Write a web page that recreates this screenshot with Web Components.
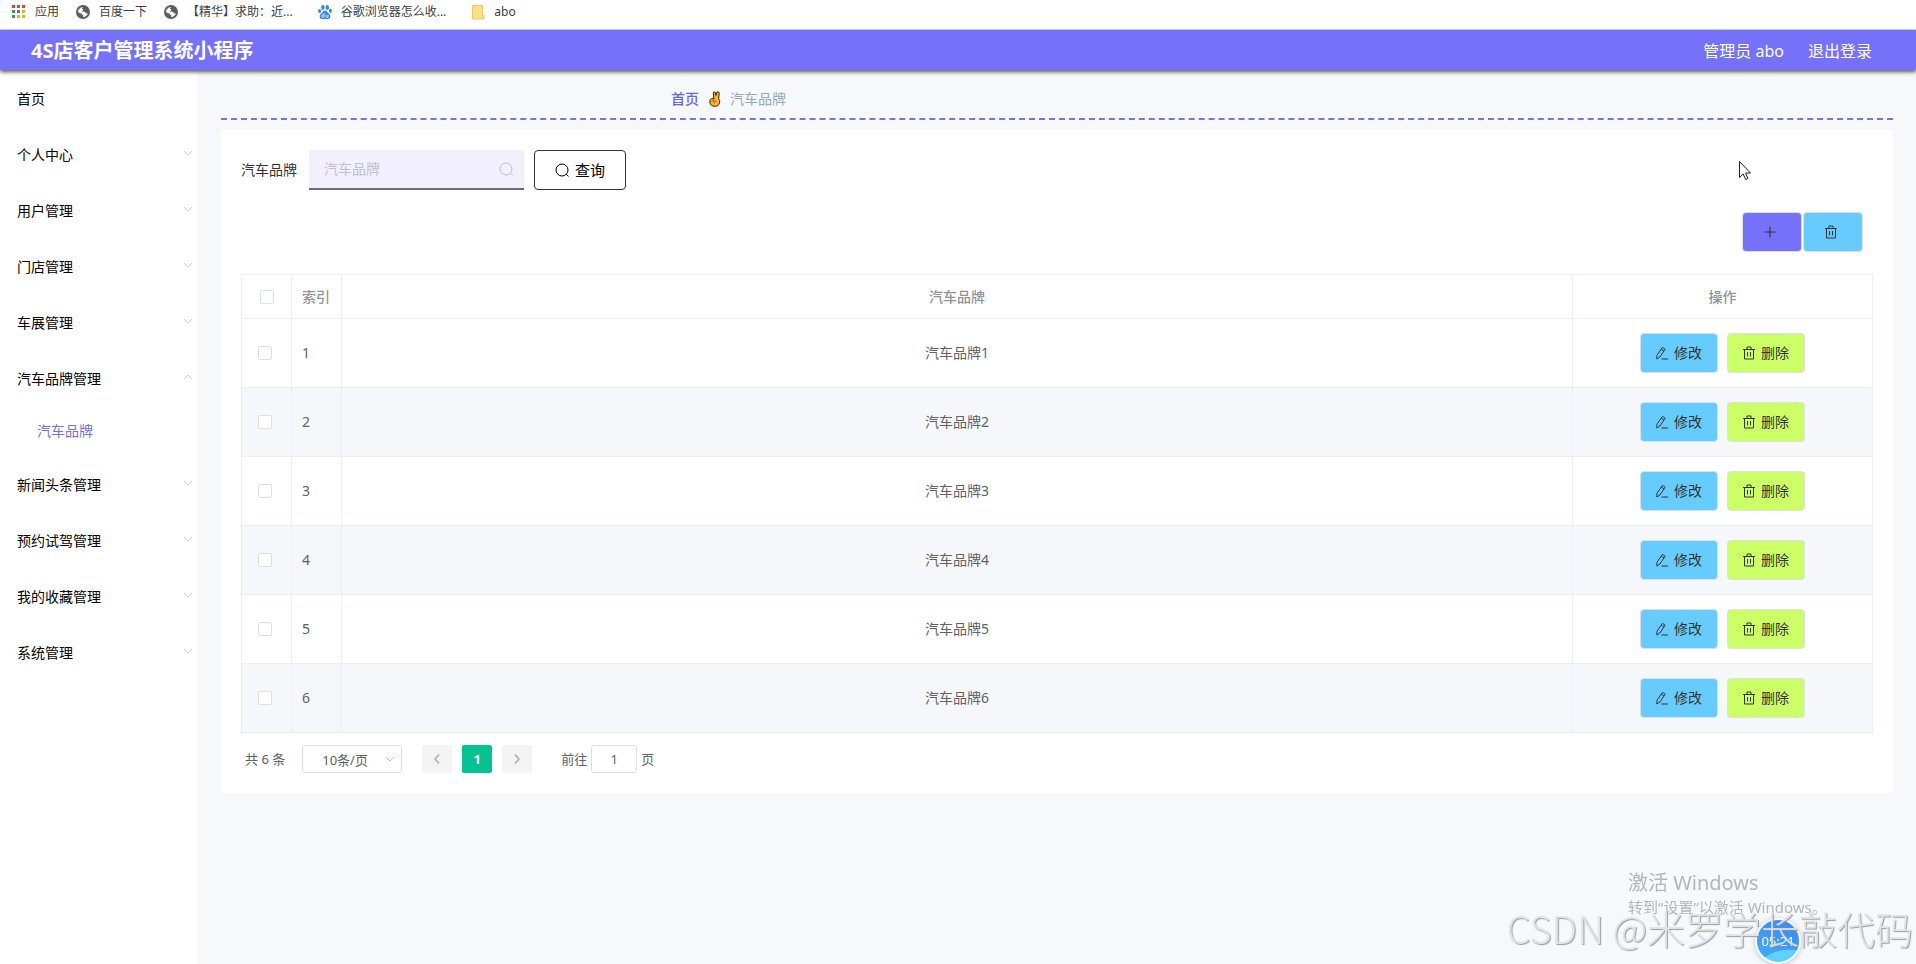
<!DOCTYPE html>
<html lang="zh-CN">
<head>
<meta charset="utf-8">
<title>4S店客户管理系统小程序</title>
<style>
html, body { margin: 0; min-height: 100vh; }
body { background: #f6f8fb; font: 14px/20px "Noto Sans", "Noto Sans CJK SC", sans-serif; color: #333; overflow-x: hidden; }
</style>
</head>
<body>
<app-shell></app-shell>
<script>
const define = (name, html, init) => {
  const t = document.createElement('template');
  t.innerHTML = '<style>*{box-sizing:border-box}a{color:inherit;text-decoration:none}svg{display:block;flex:none}button,input,select{font:inherit;margin:0}</style>' + html;
  customElements.define(name, class extends HTMLElement {
    constructor() {
      super();
      this.attachShadow({ mode: 'open' }).append(t.content.cloneNode(true));
    }
    connectedCallback() { if (init) init(this, this.shadowRoot); }
  });
};

const icons = {
  search: '<circle cx="7" cy="7" r="6"/><path d="M11.4 11.4 13.5 13.4"/>',
  plus: '<path d="M7 1.500v11M1.500 7h11"/>',
  trash: '<path d="M1 3.500h12M2.500 3.500v9.500h9V3.500M5 3.300V1h4v2.300M5.500 6v4.500M8.500 6v4.500"/>',
  edit: '<path d="M2 9.200 7.400 1.400 10.200 3.200 4.900 11 1.800 13z M6.200 3.100 9 5M6.500 13h6.500"/>',
  down: '<path d="M3 5l4 4 4-4"/>',
  up: '<path d="M3 9l4-4 4 4"/>',
  left: '<path d="M9 2.500 5 7l4 4.500"/>',
  right: '<path d="M5 2.500 9 7l-4 4.500"/>'
};
define('ui-icon', `<style>:host{display:block;width:14px;height:14px;flex:none}svg{fill:none;stroke:currentColor}</style><svg width="14" height="14" viewBox="0 0 14 14" aria-hidden="true"></svg>`,
  (el, r) => {
    const s = r.querySelector('svg');
    s.innerHTML = icons[el.getAttribute('name')] || '';
    s.setAttribute('stroke-width', el.getAttribute('weight') || '1');
  });

const marks = {
  apps: ['#d9453a','#d9453a','#d9453a','#3d9a52','#3b78e0','#e2b12d','#3d9a52','#e2b12d','#e2b12d'].map((c, i) => `<rect x="${i % 3 * 5}" y="${Math.floor(i / 3) * 5}" width="3" height="3" fill="${c}"/>`).join(''),
  globe: '<circle cx="7" cy="7" r="7" fill="#5a5d61"/><path d="M1.800 6.500C2.300 4.500 4 2.400 6.800 2L5.900 3.500 7.300 4.300 7 5.800 5.600 6.600 8.800 6.700 10.200 8.200 11.800 8.600C11.300 10.600 9.600 12 7 12.200L7.400 10.300 5.900 9.700 5.300 8.300 3.600 8.200z" fill="#fff"/><path d="M6.500 5.200 9 3.400 9.600 5.200z" fill="#5a5d61"/>',
  paw: '<g fill="#3385f0"><ellipse cx="4.900" cy="2.500" rx="1.700" ry="2.400"/><ellipse cx="9.300" cy="2.500" rx="1.700" ry="2.400"/><ellipse cx="1.600" cy="6" rx="1.500" ry="2.100"/><ellipse cx="12.400" cy="5.800" rx="1.500" ry="2.100"/><path d="M7 5.500c2 0 2.400 2 4 3.300 2.200 2 1.600 5.200-1 5.200H4c-2.600 0-3.200-3.200-1-5.200C4.600 7.500 5 5.500 7 5.500z"/></g><path d="M6 8.300v4H4.800a1.200 1.200 0 0 1 0-2.400H6M8 9.900v1.700q0 .7.700.7H10V9.900" fill="none" stroke="#fff" stroke-width=".8"/>',
  folder: '<path d="M1.500.5h10v10h1.500v3.500H1.500z" fill="#fbe08a" stroke="#e9c95f"/>'
};
define('bookmark-link', `<style>:host{display:block}a{display:flex;align-items:center;gap:9px;color:#3c4043;font-size:12px;line-height:16px;white-space:nowrap}</style>
<a href="#"><svg width="14" height="14" viewBox="0 0 14 14" overflow="visible" aria-hidden="true"></svg><slot></slot></a>`,
  (el, r) => r.querySelector('svg').innerHTML = marks[el.getAttribute('mark')]);

define('bookmark-bar', `<style>:host{display:flex;height:30px;padding:4px 12px 0;gap:17px;align-items:flex-start;background:#fff;border-bottom:1px solid #d9d9e4}.far{margin-left:8px}</style>
<bookmark-link mark="apps">应用</bookmark-link><bookmark-link mark="globe">百度一下</bookmark-link><bookmark-link mark="globe">【精华】求助：近...</bookmark-link><bookmark-link class="far" mark="paw">谷歌浏览器怎么收...</bookmark-link><bookmark-link class="far" mark="folder">abo</bookmark-link>`);

define('app-header', `<style>:host{display:flex;position:relative;z-index:1;height:40px;padding:1px 44px 0 31px;align-items:center;background:#7571f9;color:#fff;box-shadow:0 2px 4px #555}
h1{margin:0 auto 0 0;font-size:20px;line-height:24px}nav{display:flex;gap:24px;font-size:16px;line-height:24px}</style>
<h1>4S店客户管理系统小程序</h1><nav><a href="#">管理员 abo</a><a href="#">退出登录</a></nav>`);

define('menu-item', `<style>:host{display:block;color:#000}a{display:flex;height:56px;padding:0 2px 0 17px;align-items:center;justify-content:space-between}ui-icon{color:#d5d7dc;margin-bottom:4px}
:host([home]) a{height:57px}:host([sub]){color:#7571d9}:host([sub]) a{height:50px;padding:0 0 2px 37px}</style><a href="#"><slot></slot></a>`,
  (el, r) => {
    const arrow = el.getAttribute('arrow');
    if (arrow && !r.querySelector('ui-icon')) r.querySelector('a').insertAdjacentHTML('beforeend', `<ui-icon name="${arrow}"></ui-icon>`);
  });

define('side-menu', `<style>:host{display:block;width:197px;flex:none;background:#fff}nav{display:flex;flex-direction:column}</style>
<nav><menu-item home>首页</menu-item>${['个人中心', '用户管理', '门店管理', '车展管理'].map(s => `<menu-item arrow="down">${s}</menu-item>`).join('')}<menu-item arrow="up">汽车品牌管理</menu-item><menu-item sub>汽车品牌</menu-item>${['新闻头条管理', '预约试驾管理', '我的收藏管理', '系统管理'].map(s => `<menu-item arrow="down">${s}</menu-item>`).join('')}</nav>`);

define('bread-crumb', `<style>:host{display:flex;height:50px;padding:10px 0 0 450px;align-items:center;border-bottom:2px dashed #7a75d8;color:#97a8be}.home{color:#6a65de;font-weight:500}svg{margin:0 9px 0 10px}</style>
<a class="home" href="#">首页</a><svg width="12" height="16" viewBox="0 0 12 16" aria-hidden="true"><path d="M5 8 4.300 2.200Q4.500.5 6 1l.9 3.500L8 1Q10 .3 10.200 2L9.700 8l1 1.500Q11 15 6.500 15.300 1 15.500.8 11 .5 8 2.500 7.500z" fill="#fdb51e" stroke="#302b26"/><path d="M2.500 10.500Q4 8.500 7.500 10.500M4.800 10 5.500 12.500" fill="none" stroke="#8f5d13" stroke-width=".8"/></svg><span>汽车品牌</span>`);

define('ui-button', `<style>:host{display:block}button{display:flex;height:40px;align-items:center;justify-content:center;gap:5px;padding:0 15px 0 14px;border:1px solid #dcdfe6;border-radius:4px;background:var(--fill,#fff);color:#333;line-height:20px;white-space:nowrap}
:host([kind=query]) button{padding:0 20px;border-color:#333;color:#000;font-size:15px;gap:6px}
:host([kind=tool]) button{width:60px;padding:0 23px 0 19px;gap:0}</style>
<button type="button"><slot></slot></button>`,
  (el, r) => {
    const b = r.querySelector('button');
    if (b.querySelector('ui-icon')) return;
    b.insertAdjacentHTML('afterbegin', `<ui-icon name="${el.getAttribute('icon')}"></ui-icon>`);
    const label = el.getAttribute('label');
    if (label) b.setAttribute('aria-label', label);
  });

define('search-form', `<style>:host{display:block}form{display:flex;align-items:center;gap:10px}.row{display:flex;align-items:center;gap:12px}.box{display:flex;align-items:center;width:215px;height:40px;padding:0 11px 0 15px;background:#f2f0fe;border-bottom:2px solid #6d6a79;color:#b9bcc6}
input{flex:1;min-width:0;border:0;padding:0;background:none;outline:0;color:#333}input::placeholder{color:#bfc1cb;opacity:1}</style>
<form><div class="row"><label for="brand">汽车品牌</label><div class="box"><input id="brand" placeholder="汽车品牌"><ui-icon name="search"></ui-icon></div></div><ui-button kind="query" icon="search">查询</ui-button></form>`);

define('tool-bar', `<style>:host{display:flex;justify-content:flex-end;gap:1px;padding-right:10px}.add{--fill:#7571f9}.del{--fill:#66ccff}</style>
<ui-button kind="tool" class="add" icon="plus" label="新增"></ui-button><ui-button kind="tool" class="del" icon="trash" label="删除"></ui-button>`);

define('brand-table', `<style>:host{display:block;color:#606266}table{width:100%;table-layout:fixed;border-collapse:separate;border-spacing:0;border-top:1px solid #ebeef5;border-left:1px solid #ebeef5}
th,td{padding:0 10px;border-right:1px solid #ebeef5;border-bottom:1px solid #ebeef5;text-align:center}th{height:44px;color:#909399;font-weight:500}td{height:69px}tr:nth-child(even) td{background:#f5f7fb}
.pick,.num{width:50px;text-align:left}.num{padding-right:0}.ops{width:300px}td.pick{padding-left:16px}th.pick{padding-left:18px}
input{display:block;appearance:none;width:14px;height:14px;border:1px solid #dcdfe6;border-radius:2px;background:#fff}
.acts{display:flex;justify-content:center;gap:9px}.edit{--fill:#66ccff}.del{--fill:#ccff66}</style>
<table><thead><tr><th class="pick"><input type="checkbox" aria-label="全选"></th><th class="num">索引</th><th>汽车品牌</th><th class="ops">操作</th></tr></thead>
<tbody>${[1, 2, 3, 4, 5, 6].map(n => `<tr><td class="pick"><input type="checkbox" aria-label="选择${n}"></td><td class="num">${n}</td><td>汽车品牌${n}</td><td><div class="acts"><ui-button class="edit" icon="edit">修改</ui-button><ui-button class="del" icon="trash">删除</ui-button></div></td></tr>`).join('')}</tbody></table>`);

define('page-nav', `<style>:host{display:flex;align-items:center;padding:0 4px;color:#606266;font-size:13px;line-height:28px}
.size{display:flex;position:relative;margin:0 20px 0 17px}select{appearance:none;width:100px;height:28px;padding:0 19px;border:1px solid #dcdfe6;border-radius:3px;background:#fff;color:inherit}.size ui-icon{position:absolute;right:5px;top:7px;color:#c0c4cc}
.pages{display:flex;gap:10px;margin-right:29px}button{display:flex;width:30px;height:28px;padding:0;align-items:center;justify-content:center;border:0;border-radius:2px;background:#f4f4f5;color:#b8bcc4}.on{background:#05c293;color:#fff;font-weight:700}
label{display:flex;align-items:center;gap:4px}label input{width:46px;height:28px;padding:0;border:1px solid #dcdfe6;border-radius:3px;text-align:center;color:inherit}</style>
<span>共 6 条</span><div class="size"><select aria-label="每页条数"><option>10条/页</option></select><ui-icon name="down"></ui-icon></div>
<div class="pages"><button type="button" aria-label="上一页"><ui-icon name="left" weight="2"></ui-icon></button><button type="button" class="on">1</button><button type="button" aria-label="下一页"><ui-icon name="right" weight="2"></ui-icon></button></div>
<label><span>前往</span><input value="1"><span>页</span></label>`);

define('screen-overlay', `<style>.activate{position:fixed;right:92px;bottom:47px;width:196px;color:#b3b5b8;font-size:15px;line-height:20px;white-space:nowrap}.activate strong{display:block;font-weight:400;font-size:20px;line-height:28px}
.ball{position:fixed;right:115px;bottom:0;width:46px;height:46px;border-radius:50%;border:2px solid #f4faff;background:radial-gradient(circle 40px at 75% 165%,#5fd0ff 0 98%,transparent),linear-gradient(200deg,#3a86f6,#41b0fd);box-shadow:0 1px 5px #bbc;color:#fff;font-size:13px;line-height:42px;text-align:center}
.mark{position:fixed;right:3px;bottom:12px;font-family:"Noto Sans CJK SC",sans-serif;font-weight:300;font-size:38px;line-height:48px;color:#dfe0e2;text-shadow:1px 1px 1px #8f9092;white-space:nowrap;opacity:.9}
.cursor{position:fixed;left:1738px;top:160px}</style>
<div class="activate"><strong>激活 Windows</strong>转到“设置”以激活 Windows。</div><div class="ball">05:21</div><div class="mark">CSDN @米罗学长敲代码</div>
<svg class="cursor" width="14" height="21" viewBox="0 0 14 21" aria-hidden="true"><path d="M1.500 1.500v16l3.700-3.500 2.500 5.500 2.300-1-2.500-5.500h5z" fill="#fff" stroke="#222"/></svg>`);

define('app-shell', `<style>:host{display:flex;flex-direction:column;min-height:100vh}.body{display:flex;flex:1}main{flex:1;min-width:0;padding:0 23px 20px 24px}.card{display:flex;flex-direction:column;margin-top:10px;padding:20px;background:#fff}tool-bar{margin:22px 0}page-nav{margin-top:12px}</style>
<bookmark-bar></bookmark-bar><app-header></app-header><div class="body"><side-menu></side-menu><main><bread-crumb></bread-crumb><section class="card"><search-form></search-form><tool-bar></tool-bar><brand-table></brand-table><page-nav></page-nav></section></main></div><screen-overlay></screen-overlay>`);
</script>
</body>
</html>
